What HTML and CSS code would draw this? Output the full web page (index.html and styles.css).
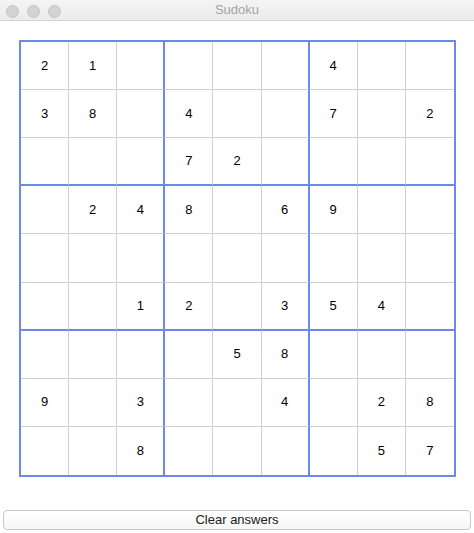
FILE: index.html
```html
<!DOCTYPE html>
<html>
<head>
<meta charset="utf-8">
<title>Sudoku</title>
<link rel="stylesheet" href="styles.css">
</head>
<body>
<div class="titlebar">
  <div class="lights"><span class="light"></span><span class="light"></span><span class="light"></span></div>
  <div class="title">Sudoku</div>
</div>
<div class="board">
  <div class="cell">2</div><div class="cell">1</div><div class="cell"></div><div class="cell"></div><div class="cell"></div><div class="cell"></div><div class="cell">4</div><div class="cell"></div><div class="cell"></div>
  <div class="cell">3</div><div class="cell">8</div><div class="cell"></div><div class="cell">4</div><div class="cell"></div><div class="cell"></div><div class="cell">7</div><div class="cell"></div><div class="cell">2</div>
  <div class="cell"></div><div class="cell"></div><div class="cell"></div><div class="cell">7</div><div class="cell">2</div><div class="cell"></div><div class="cell"></div><div class="cell"></div><div class="cell"></div>
  <div class="cell"></div><div class="cell">2</div><div class="cell">4</div><div class="cell">8</div><div class="cell"></div><div class="cell">6</div><div class="cell">9</div><div class="cell"></div><div class="cell"></div>
  <div class="cell"></div><div class="cell"></div><div class="cell"></div><div class="cell"></div><div class="cell"></div><div class="cell"></div><div class="cell"></div><div class="cell"></div><div class="cell"></div>
  <div class="cell"></div><div class="cell"></div><div class="cell">1</div><div class="cell">2</div><div class="cell"></div><div class="cell">3</div><div class="cell">5</div><div class="cell">4</div><div class="cell"></div>
  <div class="cell"></div><div class="cell"></div><div class="cell"></div><div class="cell"></div><div class="cell">5</div><div class="cell">8</div><div class="cell"></div><div class="cell"></div><div class="cell"></div>
  <div class="cell">9</div><div class="cell"></div><div class="cell">3</div><div class="cell"></div><div class="cell"></div><div class="cell">4</div><div class="cell"></div><div class="cell">2</div><div class="cell">8</div>
  <div class="cell"></div><div class="cell"></div><div class="cell">8</div><div class="cell"></div><div class="cell"></div><div class="cell"></div><div class="cell"></div><div class="cell">5</div><div class="cell">7</div>
</div>
<div class="actions">
  <button class="btn">Clear answers</button>
</div>
</body>
</html>
```
FILE: styles.css
```css
html, body {
  margin: 0;
  padding: 0;
  background: #ffffff;
  font-family: "Liberation Sans", Arial, sans-serif;
}

.titlebar {
  position: relative;
  height: 20px;
  border-bottom: 1px solid #d2d2d2;
  background: linear-gradient(#f5f5f5, #ebebeb);
  display: flex;
  align-items: center;
  justify-content: center;
}

.lights {
  position: absolute;
  left: 6px;
  top: 5px;
  display: flex;
  gap: 8px;
}

.light {
  width: 11px;
  height: 11px;
  border-radius: 50%;
  background: #d3d3d3;
  border: 0.5px solid #c4c4c4;
}

.title {
  font-size: 13px;
  color: #a4a4a4;
  line-height: 20px;
}

.board {
  margin: 19px 0 0 19px;
  width: 437px;
  height: 437px;
  box-sizing: border-box;
  border: 2px solid #6e88e8;
  display: grid;
  grid-template-columns: repeat(9, 1fr);
  grid-template-rows: repeat(9, 1fr);
}

.cell {
  box-sizing: border-box;
  border-right: 1px solid #d0d0d0;
  border-bottom: 1px solid #d0d0d0;
  display: flex;
  align-items: center;
  justify-content: center;
  font-size: 13px;
  color: #000000;
  padding-bottom: 1px;
}

.cell:nth-child(9n+3),
.cell:nth-child(9n+6) {
  border-right: 2px solid #6e88e8;
}

.cell:nth-child(9n) {
  border-right: none;
}

.cell:nth-child(n+19):nth-child(-n+27),
.cell:nth-child(n+46):nth-child(-n+54) {
  border-bottom: 2px solid #6e88e8;
}

.cell:nth-child(n+73) {
  border-bottom: none;
}

.actions {
  padding: 33px 3px 0 3px;
}

.btn {
  display: block;
  width: 100%;
  height: 20px;
  padding: 0;
  border: 1px solid #c9c9c9;
  border-radius: 4px;
  background: linear-gradient(#ffffff, #f6f6f6);
  font-family: "Liberation Sans", Arial, sans-serif;
  font-size: 13px;
  color: #202020;
  line-height: 18px;
}
```
